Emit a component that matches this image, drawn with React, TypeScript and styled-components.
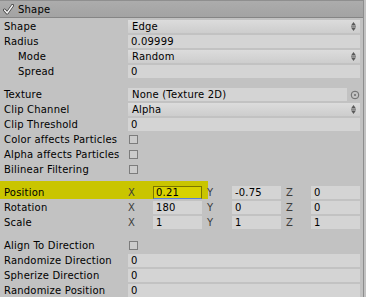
import React from "react";
import styled, { createGlobalStyle, css } from "styled-components";

const Global = createGlobalStyle`
  html, body { margin: 0; padding: 0; background: #c2c2c2; }
  body { font-family: "DejaVu Sans", "Liberation Sans", sans-serif; font-size: 10px; color: #000; }
`;

const Panel = styled.div`
  width: 364px;
  height: 297px;
  overflow: hidden;
  background: #c2c2c2;
  border-right: 1px solid #8e8e8e;
  box-sizing: border-box;
`;

const Header = styled.div`
  height: 18px;
  box-sizing: border-box;
  background: linear-gradient(#acacac, #a3a3a3);
  border-top: 1px solid #8f8f8f;
  border-bottom: 1px solid #858585;
  display: flex;
  align-items: center;
  gap: 4px;
  padding-left: 3px;
  margin-bottom: 1px;
`;

const HeaderTitle = styled.span`
  letter-spacing: 0.2px;
`;

const Row = styled.div`
  position: relative;
  height: 15px;
  display: grid;
  grid-template-columns: 128px 232px;
  align-items: center;
`;

const Spacer = styled.div`
  height: 8px;
`;

const Label = styled.div<{ $indent?: boolean }>`
  position: relative;
  padding-left: ${(p) => (p.$indent ? "18px" : "4px")};
  white-space: nowrap;
  letter-spacing: 0.2px;
`;

const Highlight = styled.div`
  position: absolute;
  left: 0;
  top: -4px;
  width: 208px;
  height: 18px;
  background: #c9c500;
`;

const fieldBase = css`
  position: relative;
  height: 13px;
  box-sizing: border-box;
  display: flex;
  align-items: center;
  white-space: nowrap;
  overflow: hidden;
  letter-spacing: 0.2px;
`;

const TextField = styled.div<{ $active?: boolean }>`
  ${fieldBase};
  padding-left: 3px;
  background: #d4d4d4;
  ${(p) =>
    p.$active &&
    css`
      background: #d8d200;
      border: 1px solid #7a7600;
      border-bottom: 1px solid #5b7fd8;
      padding-left: 2px;
    `}
`;

const Popup = styled.div`
  ${fieldBase};
  padding-left: 4px;
  padding-right: 4px;
  justify-content: space-between;
  background: linear-gradient(#dcdcdc, #cdcdcd);
`;

const ObjectField = styled.div`
  display: flex;
  align-items: center;
  gap: 3px;
`;

const ObjectBox = styled.div`
  ${fieldBase};
  flex: 1;
  padding-left: 4px;
  background: #d4d4d4;
`;

const Checkbox = styled.div`
  width: 9px;
  height: 9px;
  box-sizing: border-box;
  border: 1px solid #7c7c7c;
  background: #cbcbcb;
  margin-left: 1px;
`;

const Vector = styled.div`
  display: grid;
  grid-template-columns: repeat(3, 1fr);
  column-gap: 5px;
`;

const Axis = styled.div`
  display: grid;
  grid-template-columns: 25px 1fr;
  align-items: center;
`;

const AxisLabel = styled.span`
  position: relative;
  color: #3c3c3c;
`;

const Arrows = () => (
  <svg width="5" height="9" viewBox="0 0 5 9">
    <path d="M2.5 0 L5 3.5 L0 3.5 Z" fill="#5a5a5a" />
    <path d="M2.5 9 L5 5.5 L0 5.5 Z" fill="#5a5a5a" />
    <rect x="0" y="4" width="5" height="1" fill="#8a8a8a" />
  </svg>
);

const Target = () => (
  <svg width="10" height="10" viewBox="0 0 10 10">
    <circle cx="5" cy="5" r="3.8" fill="none" stroke="#6a6a6a" strokeWidth="1" />
    <circle cx="5" cy="5" r="1" fill="#6a6a6a" />
  </svg>
);

const Check = () => (
  <svg width="11" height="11" viewBox="0 0 11 11">
    <path d="M1.5 6 L4.2 9 L9.5 1.5" fill="none" stroke="#3a3a3a" strokeWidth="3" strokeLinecap="round" strokeLinejoin="round" />
    <path d="M1.5 6 L4.2 9 L9.5 1.5" fill="none" stroke="#f4f4f4" strokeWidth="1.5" strokeLinecap="round" strokeLinejoin="round" />
  </svg>
);

type Vec = [string, string, string];

const VectorRow = ({ label, v, active }: { label: string; v: Vec; active?: boolean }) => (
  <Row>
    {active && <Highlight />}
    <Label>{label}</Label>
    <Vector>
      {(["X", "Y", "Z"] as const).map((a, i) => (
        <Axis key={a}>
          <AxisLabel>{a}</AxisLabel>
          <TextField $active={active && i === 0}>{v[i]}</TextField>
        </Axis>
      ))}
    </Vector>
  </Row>
);

const FieldRow = ({ label, value, indent }: { label: string; value: string; indent?: boolean }) => (
  <Row>
    <Label $indent={indent}>{label}</Label>
    <TextField>{value}</TextField>
  </Row>
);

const PopupRow = ({ label, value, indent }: { label: string; value: string; indent?: boolean }) => (
  <Row>
    <Label $indent={indent}>{label}</Label>
    <Popup>
      <span>{value}</span>
      <Arrows />
    </Popup>
  </Row>
);

const CheckRow = ({ label }: { label: string }) => (
  <Row>
    <Label>{label}</Label>
    <Checkbox />
  </Row>
);

export default function App() {
  return (
    <>
      <Global />
      <Panel>
        <Header>
          <Check />
          <HeaderTitle>Shape</HeaderTitle>
        </Header>
        <PopupRow label="Shape" value="Edge" />
        <FieldRow label="Radius" value="0.09999" />
        <PopupRow label="Mode" value="Random" indent />
        <FieldRow label="Spread" value="0" indent />
        <Spacer />
        <Row>
          <Label>Texture</Label>
          <ObjectField>
            <ObjectBox>None (Texture 2D)</ObjectBox>
            <Target />
          </ObjectField>
        </Row>
        <PopupRow label="Clip Channel" value="Alpha" />
        <FieldRow label="Clip Threshold" value="0" />
        <CheckRow label="Color affects Particles" />
        <CheckRow label="Alpha affects Particles" />
        <CheckRow label="Bilinear Filtering" />
        <Spacer />
        <VectorRow label="Position" v={["0.21", "-0.75", "0"]} active />
        <VectorRow label="Rotation" v={["180", "0", "0"]} />
        <VectorRow label="Scale" v={["1", "1", "1"]} />
        <Spacer />
        <CheckRow label="Align To Direction" />
        <FieldRow label="Randomize Direction" value="0" />
        <FieldRow label="Spherize Direction" value="0" />
        <FieldRow label="Randomize Position" value="0" />
      </Panel>
    </>
  );
}
